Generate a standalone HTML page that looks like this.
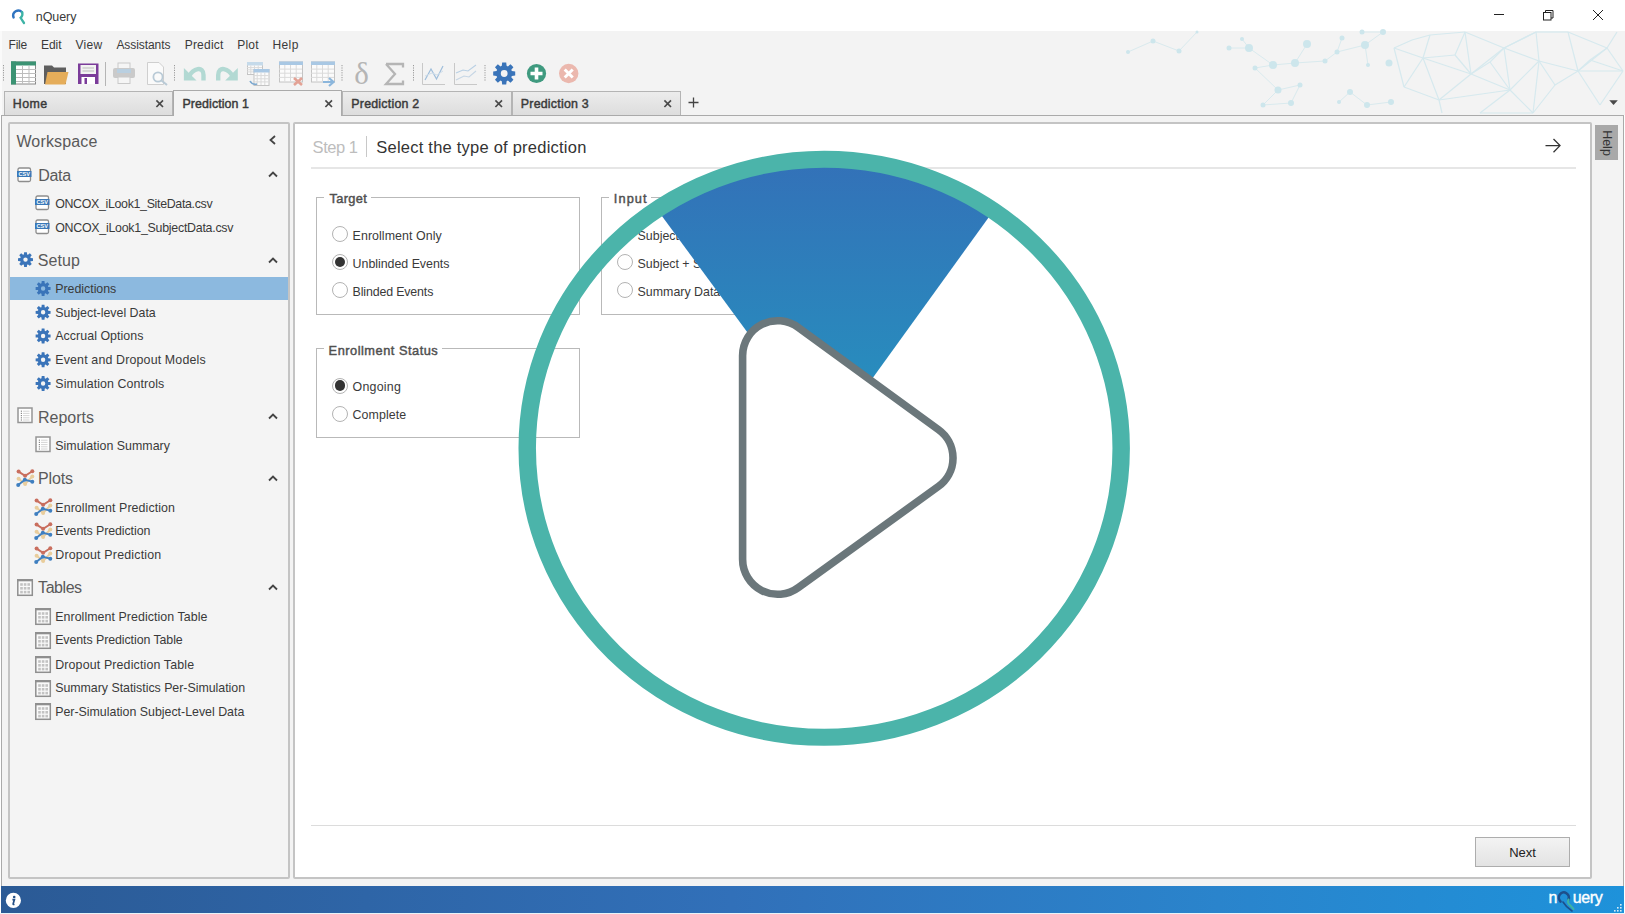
<!DOCTYPE html>
<html><head><meta charset="utf-8">
<style>
*{box-sizing:border-box;margin:0;padding:0}
html,body{width:1625px;height:914px;overflow:hidden;background:#fff;font-family:"Liberation Sans",sans-serif;color:#333}
.abs{position:absolute}
.t{position:absolute;white-space:nowrap}
.menu{position:absolute;top:38px;font-size:12px;color:#3a3a3a;white-space:nowrap}
.tab{position:absolute;top:91px;height:24px;border:1px solid #b4b4b4;border-bottom:none;background:linear-gradient(#ececec,#dddddd)}
.tl{position:absolute;font-size:12px;font-weight:bold;color:#444;white-space:nowrap}
.hdr{position:absolute;left:38px;font-size:16px;color:#5a5a5a;white-space:nowrap}
.item{position:absolute;left:55px;font-size:12.4px;color:#3a3a3a;white-space:nowrap}
.radio{position:absolute;width:16px;height:16px;border:1px solid #b3b3b3;border-radius:50%;background:#fff}
.radio.on::after{content:"";position:absolute;left:1.75px;top:1.75px;width:10.5px;height:10.5px;border-radius:50%;background:#333}
.rl{position:absolute;font-size:12.4px;color:#3a3a3a;white-space:nowrap}
.gl{position:absolute;padding:0 3px;background:#fff;font-size:12.6px;font-weight:bold;color:#555;white-space:nowrap}
svg{position:absolute;overflow:visible}
</style></head>
<body>

<div class="abs" style="left:0;top:0;width:1625px;height:31px;background:#fff"></div>
<div class="abs" style="left:0;top:31px;width:1625px;height:84px;background:#f3f3f3"></div>
<div class="abs" style="left:0;top:31px;width:2px;height:84px;background:#fafafa"></div>
<div class="abs" style="left:1px;top:115px;width:1623px;height:772px;background:#f3f3f3;border:1px solid #aaaaaa;border-bottom:none"></div>
<div class="abs" style="left:8px;top:122px;width:282px;height:757px;background:#f4f4f4;border:2px solid #c4c4c4;border-radius:2px"></div>
<div class="abs" style="left:293px;top:122px;width:1299px;height:757px;background:#fff;border:2px solid #c4c4c4;border-radius:2px"></div>
<div class="abs" style="left:1px;top:886px;width:1623px;height:26.5px;background:linear-gradient(90deg,#2b5a95 0%,#3170b9 45%,#2a84cc 75%,#1e92da 100%)"></div>
<div class="abs" style="left:0;top:912.5px;width:1625px;height:1.5px;background:#e8f4f8"></div>
<svg style="left:0;top:0" width="1625" height="914"><line x1="1128" y1="52" x2="1153" y2="41" stroke="#d9eaee" stroke-width="1"/><line x1="1153" y1="41" x2="1179" y2="51" stroke="#d9eaee" stroke-width="1"/><line x1="1197" y1="32" x2="1179" y2="51" stroke="#d9eaee" stroke-width="1"/><line x1="1229" y1="48" x2="1249" y2="48" stroke="#d9eaee" stroke-width="1"/><line x1="1242" y1="39" x2="1249" y2="48" stroke="#d9eaee" stroke-width="1"/><line x1="1249" y1="48" x2="1273" y2="65" stroke="#d9eaee" stroke-width="1"/><line x1="1273" y1="65" x2="1295" y2="63" stroke="#d9eaee" stroke-width="1"/><line x1="1295" y1="63" x2="1307" y2="44" stroke="#d9eaee" stroke-width="1"/><line x1="1273" y1="65" x2="1255" y2="68" stroke="#d9eaee" stroke-width="1"/><line x1="1255" y1="68" x2="1278" y2="90" stroke="#d9eaee" stroke-width="1"/><line x1="1278" y1="90" x2="1300" y2="85" stroke="#d9eaee" stroke-width="1"/><line x1="1278" y1="90" x2="1263" y2="105" stroke="#d9eaee" stroke-width="1"/><line x1="1263" y1="105" x2="1291" y2="103" stroke="#d9eaee" stroke-width="1"/><line x1="1295" y1="63" x2="1325" y2="61" stroke="#d9eaee" stroke-width="1"/><line x1="1325" y1="61" x2="1337" y2="52" stroke="#d9eaee" stroke-width="1"/><line x1="1337" y1="52" x2="1342" y2="38" stroke="#d9eaee" stroke-width="1"/><line x1="1337" y1="52" x2="1365" y2="45" stroke="#d9eaee" stroke-width="1"/><line x1="1365" y1="45" x2="1368" y2="65" stroke="#d9eaee" stroke-width="1"/><line x1="1350" y1="92" x2="1339" y2="102" stroke="#d9eaee" stroke-width="1"/><line x1="1350" y1="92" x2="1367" y2="105" stroke="#d9eaee" stroke-width="1"/><line x1="1367" y1="105" x2="1391" y2="102" stroke="#d9eaee" stroke-width="1"/><line x1="1365" y1="45" x2="1383" y2="32" stroke="#d9eaee" stroke-width="1"/><line x1="1383" y1="32" x2="1362" y2="32" stroke="#d9eaee" stroke-width="1"/><line x1="1300" y1="85" x2="1291" y2="103" stroke="#d9eaee" stroke-width="1"/><circle cx="1128" cy="52" r="2" fill="#cde6ec"/><circle cx="1153" cy="41" r="2.5" fill="#cde6ec"/><circle cx="1179" cy="51" r="2.5" fill="#cde6ec"/><circle cx="1197" cy="32" r="1.5" fill="#cde6ec"/><circle cx="1229" cy="48" r="2.5" fill="#cde6ec"/><circle cx="1242" cy="39" r="2" fill="#cde6ec"/><circle cx="1249" cy="48" r="4" fill="#cde6ec"/><circle cx="1273" cy="65" r="4" fill="#cde6ec"/><circle cx="1295" cy="63" r="4" fill="#cde6ec"/><circle cx="1307" cy="44" r="4" fill="#cde6ec"/><circle cx="1325" cy="61" r="2.5" fill="#cde6ec"/><circle cx="1337" cy="52" r="2.5" fill="#cde6ec"/><circle cx="1342" cy="38" r="2.5" fill="#cde6ec"/><circle cx="1365" cy="45" r="4" fill="#cde6ec"/><circle cx="1368" cy="65" r="2" fill="#cde6ec"/><circle cx="1255" cy="68" r="2.5" fill="#cde6ec"/><circle cx="1278" cy="90" r="3.5" fill="#cde6ec"/><circle cx="1300" cy="85" r="2.5" fill="#cde6ec"/><circle cx="1263" cy="105" r="2.5" fill="#cde6ec"/><circle cx="1291" cy="103" r="3" fill="#cde6ec"/><circle cx="1350" cy="92" r="3" fill="#cde6ec"/><circle cx="1339" cy="102" r="2" fill="#cde6ec"/><circle cx="1367" cy="105" r="3" fill="#cde6ec"/><circle cx="1391" cy="102" r="3" fill="#cde6ec"/><circle cx="1389" cy="63" r="3.5" fill="#cde6ec"/><circle cx="1383" cy="32" r="3" fill="#cde6ec"/><circle cx="1362" cy="32" r="2.5" fill="#cde6ec"/><line x1="1394" y1="48" x2="1423" y2="58" stroke="#d6e9ee" stroke-width="1.2"/><line x1="1423" y1="58" x2="1430" y2="35" stroke="#d6e9ee" stroke-width="1.2"/><line x1="1394" y1="48" x2="1404" y2="87" stroke="#d6e9ee" stroke-width="1.2"/><line x1="1404" y1="87" x2="1423" y2="58" stroke="#d6e9ee" stroke-width="1.2"/><line x1="1423" y1="58" x2="1439" y2="100" stroke="#d6e9ee" stroke-width="1.2"/><line x1="1404" y1="87" x2="1439" y2="100" stroke="#d6e9ee" stroke-width="1.2"/><line x1="1430" y1="35" x2="1465" y2="32" stroke="#d6e9ee" stroke-width="1.2"/><line x1="1465" y1="32" x2="1471" y2="74" stroke="#d6e9ee" stroke-width="1.2"/><line x1="1423" y1="58" x2="1471" y2="74" stroke="#d6e9ee" stroke-width="1.2"/><line x1="1439" y1="100" x2="1471" y2="74" stroke="#d6e9ee" stroke-width="1.2"/><line x1="1471" y1="74" x2="1504" y2="48" stroke="#d6e9ee" stroke-width="1.2"/><line x1="1465" y1="32" x2="1504" y2="48" stroke="#d6e9ee" stroke-width="1.2"/><line x1="1504" y1="48" x2="1510" y2="90" stroke="#d6e9ee" stroke-width="1.2"/><line x1="1471" y1="74" x2="1510" y2="90" stroke="#d6e9ee" stroke-width="1.2"/><line x1="1510" y1="90" x2="1439" y2="100" stroke="#d6e9ee" stroke-width="1.2"/><line x1="1439" y1="100" x2="1442" y2="113" stroke="#d6e9ee" stroke-width="1.2"/><line x1="1510" y1="90" x2="1480" y2="113" stroke="#d6e9ee" stroke-width="1.2"/><line x1="1504" y1="48" x2="1536" y2="32" stroke="#d6e9ee" stroke-width="1.2"/><line x1="1536" y1="32" x2="1539" y2="61" stroke="#d6e9ee" stroke-width="1.2"/><line x1="1504" y1="48" x2="1539" y2="61" stroke="#d6e9ee" stroke-width="1.2"/><line x1="1539" y1="61" x2="1510" y2="90" stroke="#d6e9ee" stroke-width="1.2"/><line x1="1510" y1="90" x2="1533" y2="113" stroke="#d6e9ee" stroke-width="1.2"/><line x1="1539" y1="61" x2="1578" y2="71" stroke="#d6e9ee" stroke-width="1.2"/><line x1="1536" y1="32" x2="1568" y2="32" stroke="#d6e9ee" stroke-width="1.2"/><line x1="1568" y1="32" x2="1578" y2="71" stroke="#d6e9ee" stroke-width="1.2"/><line x1="1578" y1="71" x2="1607" y2="48" stroke="#d6e9ee" stroke-width="1.2"/><line x1="1568" y1="32" x2="1607" y2="48" stroke="#d6e9ee" stroke-width="1.2"/><line x1="1607" y1="48" x2="1617" y2="32" stroke="#d6e9ee" stroke-width="1.2"/><line x1="1607" y1="48" x2="1623" y2="71" stroke="#d6e9ee" stroke-width="1.2"/><line x1="1578" y1="71" x2="1623" y2="71" stroke="#d6e9ee" stroke-width="1.2"/><line x1="1623" y1="71" x2="1600" y2="105" stroke="#d6e9ee" stroke-width="1.2"/><line x1="1578" y1="71" x2="1600" y2="105" stroke="#d6e9ee" stroke-width="1.2"/><line x1="1533" y1="113" x2="1480" y2="113" stroke="#d6e9ee" stroke-width="1.2"/><line x1="1539" y1="61" x2="1533" y2="113" stroke="#d6e9ee" stroke-width="1.2"/><line x1="1455" y1="55" x2="1465" y2="32" stroke="#d6e9ee" stroke-width="1.2"/><line x1="1455" y1="55" x2="1471" y2="74" stroke="#d6e9ee" stroke-width="1.2"/><line x1="1455" y1="55" x2="1423" y2="58" stroke="#d6e9ee" stroke-width="1.2"/><line x1="1490" y1="62" x2="1504" y2="48" stroke="#d6e9ee" stroke-width="1.2"/><line x1="1490" y1="62" x2="1471" y2="74" stroke="#d6e9ee" stroke-width="1.2"/><line x1="1490" y1="62" x2="1510" y2="90" stroke="#d6e9ee" stroke-width="1.2"/><line x1="1520" y1="40" x2="1536" y2="32" stroke="#d6e9ee" stroke-width="1.2"/><line x1="1520" y1="40" x2="1504" y2="48" stroke="#d6e9ee" stroke-width="1.2"/><line x1="1555" y1="85" x2="1539" y2="61" stroke="#d6e9ee" stroke-width="1.2"/><line x1="1555" y1="85" x2="1578" y2="71" stroke="#d6e9ee" stroke-width="1.2"/><line x1="1555" y1="85" x2="1533" y2="113" stroke="#d6e9ee" stroke-width="1.2"/><line x1="1590" y1="60" x2="1578" y2="71" stroke="#d6e9ee" stroke-width="1.2"/><line x1="1590" y1="60" x2="1607" y2="48" stroke="#d6e9ee" stroke-width="1.2"/><line x1="1590" y1="60" x2="1623" y2="71" stroke="#d6e9ee" stroke-width="1.2"/><line x1="1412" y1="40" x2="1394" y2="48" stroke="#d6e9ee" stroke-width="1.2"/><line x1="1412" y1="40" x2="1430" y2="35" stroke="#d6e9ee" stroke-width="1.2"/></svg>
<svg style="left:0;top:0" width="40" height="31">
<path d="M13.6 17.5 A5.1 5.1 0 0 1 22.1 12.2" fill="none" stroke="#2f74c0" stroke-width="2.4" stroke-linecap="round"/>
<path d="M22.1 12.2 A5.1 5.1 0 0 1 20.6 17.8 L24 23" fill="none" stroke="#3db3a6" stroke-width="2.3" stroke-linecap="round"/>
</svg>
<div class="t" style="left:35.8px;top:9.69px;font-size:12.5px;letter-spacing:-0.080px;color:#3a3a3a;line-height:normal;">nQuery</div>
<svg style="left:1480px;top:0" width="145" height="31">
<line x1="14" y1="14.5" x2="24" y2="14.5" stroke="#222" stroke-width="1"/>
<rect x="63.5" y="12.5" width="7.5" height="7.5" fill="none" stroke="#222" stroke-width="1"/>
<path d="M65.5 12.5 V10.5 H73 V18 H71" fill="none" stroke="#222" stroke-width="1"/>
<line x1="113" y1="10" x2="123" y2="20" stroke="#222" stroke-width="1"/>
<line x1="123" y1="10" x2="113" y2="20" stroke="#222" stroke-width="1"/>
</svg>
<div class="t" style="left:8.6px;top:37.94px;font-size:12px;letter-spacing:-0.273px;color:#3a3a3a;line-height:normal;">File</div>
<div class="t" style="left:41.0px;top:37.94px;font-size:12px;letter-spacing:-0.067px;color:#3a3a3a;line-height:normal;">Edit</div>
<div class="t" style="left:75.4px;top:37.94px;font-size:12px;letter-spacing:0.300px;color:#3a3a3a;line-height:normal;">View</div>
<div class="t" style="left:116.4px;top:37.94px;font-size:12px;letter-spacing:-0.073px;color:#3a3a3a;line-height:normal;">Assistants</div>
<div class="t" style="left:184.7px;top:37.94px;font-size:12px;letter-spacing:0.213px;color:#3a3a3a;line-height:normal;">Predict</div>
<div class="t" style="left:237.2px;top:37.94px;font-size:12px;letter-spacing:0.233px;color:#3a3a3a;line-height:normal;">Plot</div>
<div class="t" style="left:272.5px;top:37.94px;font-size:12px;letter-spacing:0.380px;color:#3a3a3a;line-height:normal;">Help</div>
<svg style="left:0;top:56px" width="600" height="34"><rect x="3" y="9.0" width="1" height="1.2" fill="#9a9a9a"/><rect x="3" y="11.4" width="1" height="1.2" fill="#9a9a9a"/><rect x="3" y="13.8" width="1" height="1.2" fill="#9a9a9a"/><rect x="3" y="16.2" width="1" height="1.2" fill="#9a9a9a"/><rect x="3" y="18.6" width="1" height="1.2" fill="#9a9a9a"/><rect x="3" y="21.0" width="1" height="1.2" fill="#9a9a9a"/><rect x="3" y="23.4" width="1" height="1.2" fill="#9a9a9a"/><rect x="174" y="9.0" width="1" height="1.2" fill="#9a9a9a"/><rect x="174" y="11.4" width="1" height="1.2" fill="#9a9a9a"/><rect x="174" y="13.8" width="1" height="1.2" fill="#9a9a9a"/><rect x="174" y="16.2" width="1" height="1.2" fill="#9a9a9a"/><rect x="174" y="18.6" width="1" height="1.2" fill="#9a9a9a"/><rect x="174" y="21.0" width="1" height="1.2" fill="#9a9a9a"/><rect x="174" y="23.4" width="1" height="1.2" fill="#9a9a9a"/><rect x="341.5" y="9.0" width="1" height="1.2" fill="#9a9a9a"/><rect x="341.5" y="11.4" width="1" height="1.2" fill="#9a9a9a"/><rect x="341.5" y="13.8" width="1" height="1.2" fill="#9a9a9a"/><rect x="341.5" y="16.2" width="1" height="1.2" fill="#9a9a9a"/><rect x="341.5" y="18.6" width="1" height="1.2" fill="#9a9a9a"/><rect x="341.5" y="21.0" width="1" height="1.2" fill="#9a9a9a"/><rect x="341.5" y="23.4" width="1" height="1.2" fill="#9a9a9a"/><rect x="413" y="9.0" width="1" height="1.2" fill="#9a9a9a"/><rect x="413" y="11.4" width="1" height="1.2" fill="#9a9a9a"/><rect x="413" y="13.8" width="1" height="1.2" fill="#9a9a9a"/><rect x="413" y="16.2" width="1" height="1.2" fill="#9a9a9a"/><rect x="413" y="18.6" width="1" height="1.2" fill="#9a9a9a"/><rect x="413" y="21.0" width="1" height="1.2" fill="#9a9a9a"/><rect x="413" y="23.4" width="1" height="1.2" fill="#9a9a9a"/><rect x="484.5" y="9.0" width="1" height="1.2" fill="#9a9a9a"/><rect x="484.5" y="11.4" width="1" height="1.2" fill="#9a9a9a"/><rect x="484.5" y="13.8" width="1" height="1.2" fill="#9a9a9a"/><rect x="484.5" y="16.2" width="1" height="1.2" fill="#9a9a9a"/><rect x="484.5" y="18.6" width="1" height="1.2" fill="#9a9a9a"/><rect x="484.5" y="21.0" width="1" height="1.2" fill="#9a9a9a"/><rect x="484.5" y="23.4" width="1" height="1.2" fill="#9a9a9a"/><rect x="11.5" y="6" width="24" height="22" fill="#fff" stroke="#8a8a8a" stroke-width="1"/><rect x="11" y="5.5" width="25" height="4" fill="#3b9373"/><rect x="11" y="5.5" width="5" height="23" fill="#3b9373"/><line x1="16" y1="13.5" x2="36" y2="13.5" stroke="#bdbdbd" stroke-width="1"/><line x1="16" y1="17.5" x2="36" y2="17.5" stroke="#bdbdbd" stroke-width="1"/><line x1="16" y1="21.5" x2="36" y2="21.5" stroke="#bdbdbd" stroke-width="1"/><line x1="16" y1="25.5" x2="36" y2="25.5" stroke="#bdbdbd" stroke-width="1"/><line x1="22.5" y1="9.5" x2="22.5" y2="28" stroke="#bdbdbd" stroke-width="1"/><line x1="29" y1="9.5" x2="29" y2="28" stroke="#bdbdbd" stroke-width="1"/><path d="M44 9.5 H52 L54 11.5 H66 V28 H44 Z" fill="#5e5e5e"/><path d="M47.5 16 H68.5 L65.5 28.5 H45 Z" fill="#e5ad5a"/><rect x="78" y="7.5" width="20.5" height="20.5" fill="#7b3c9a"/><rect x="80.5" y="9" width="15.5" height="9" fill="#f2f2f2"/><line x1="82.5" y1="12" x2="94" y2="12" stroke="#bbb" stroke-width="1"/><line x1="82.5" y1="15" x2="94" y2="15" stroke="#bbb" stroke-width="1"/><rect x="81.5" y="21" width="13.5" height="7" fill="#fff"/><rect x="84.5" y="22" width="2.5" height="6" fill="#7b3c9a"/><line x1="105.5" y1="6" x2="105.5" y2="30" stroke="#b5b5b5" stroke-width="1"/><rect x="118" y="7" width="12" height="6" fill="#f5f5f5" stroke="#c9c9c9"/><rect x="113" y="12" width="22" height="10" rx="2" fill="#cacaca"/><rect x="117" y="13" width="14" height="4" fill="#b9cfe0"/><rect x="118" y="21" width="12" height="6.5" fill="#f5f5f5" stroke="#c9c9c9"/><path d="M147.5 6.5 H159 L163.5 11 V28.5 H147.5 Z" fill="#fafafa" stroke="#cfcfcf" stroke-width="1"/><circle cx="158" cy="21" r="4.6" fill="none" stroke="#b9cad6" stroke-width="1.8"/><line x1="161.5" y1="24.5" x2="167" y2="29" stroke="#b9cad6" stroke-width="2"/><g transform="translate(0 -56)"><path d="M183.9 68 L183.9 80.6 L196.5 80.6 Z" fill="#b2d9d3"/><path d="M189 76.5 C193 68.5 203.5 65.5 203.5 75 L203.5 80.6" fill="none" stroke="#b2d9d3" stroke-width="4.4"/><path d="M237.79999999999998 68 L237.79999999999998 80.6 L225.2 80.6 Z" fill="#b2d9d3"/><path d="M232.7 76.5 C228.7 68.5 218.2 65.5 218.2 75 L218.2 80.6" fill="none" stroke="#b2d9d3" stroke-width="4.4"/></g><rect x="247.5" y="6.5" width="15" height="12" fill="#fbfbfb" stroke="#c4c4c4"/><rect x="247" y="6" width="16" height="3.5" fill="#c5daea"/><line x1="247" y1="11.6" x2="262" y2="11.6" stroke="#dadada"/><line x1="247" y1="13.8" x2="262" y2="13.8" stroke="#dadada"/><line x1="247" y1="15.9" x2="262" y2="15.9" stroke="#dadada"/><line x1="250.8" y1="9.5" x2="250.8" y2="18" stroke="#dadada"/><line x1="254.5" y1="9.5" x2="254.5" y2="18" stroke="#dadada"/><line x1="258.2" y1="9.5" x2="258.2" y2="18" stroke="#dadada"/><rect x="254.0" y="13.5" width="15" height="16" fill="#fbfbfb" stroke="#c4c4c4"/><rect x="253.5" y="13" width="16" height="3.5" fill="#a9c8e4"/><line x1="253.5" y1="19.6" x2="268.5" y2="19.6" stroke="#dadada"/><line x1="253.5" y1="22.8" x2="268.5" y2="22.8" stroke="#dadada"/><line x1="253.5" y1="25.9" x2="268.5" y2="25.9" stroke="#dadada"/><line x1="257.2" y1="16.5" x2="257.2" y2="29" stroke="#dadada"/><line x1="261.0" y1="16.5" x2="261.0" y2="29" stroke="#dadada"/><line x1="264.8" y1="16.5" x2="264.8" y2="29" stroke="#dadada"/><path d="M250 25 Q252 29 257 28" fill="none" stroke="#7aa7cf" stroke-width="1.6"/><rect x="279.5" y="6.0" width="23" height="20" fill="#fbfbfb" stroke="#c4c4c4"/><rect x="279" y="5.5" width="24" height="3.5" fill="#a9c8e4"/><line x1="279" y1="13.1" x2="302" y2="13.1" stroke="#dadada"/><line x1="279" y1="17.2" x2="302" y2="17.2" stroke="#dadada"/><line x1="279" y1="21.4" x2="302" y2="21.4" stroke="#dadada"/><line x1="284.8" y1="9.0" x2="284.8" y2="25.5" stroke="#dadada"/><line x1="290.5" y1="9.0" x2="290.5" y2="25.5" stroke="#dadada"/><line x1="296.2" y1="9.0" x2="296.2" y2="25.5" stroke="#dadada"/><path d="M294 22 L302 29 M302 22 L294 29" stroke="#e3a295" stroke-width="2.6"/><rect x="311.5" y="6.0" width="23" height="20" fill="#fbfbfb" stroke="#c4c4c4"/><rect x="311" y="5.5" width="24" height="3.5" fill="#a9c8e4"/><line x1="311" y1="13.1" x2="334" y2="13.1" stroke="#dadada"/><line x1="311" y1="17.2" x2="334" y2="17.2" stroke="#dadada"/><line x1="311" y1="21.4" x2="334" y2="21.4" stroke="#dadada"/><line x1="316.8" y1="9.0" x2="316.8" y2="25.5" stroke="#dadada"/><line x1="322.5" y1="9.0" x2="322.5" y2="25.5" stroke="#dadada"/><line x1="328.2" y1="9.0" x2="328.2" y2="25.5" stroke="#dadada"/><path d="M323 26 H333 M329 22 L333.5 26 L329 30" fill="none" stroke="#8bb6dc" stroke-width="2.2"/><text x="354.2" y="28" font-family="Liberation Serif" font-size="31" fill="#b5b5b5">δ</text><path d="M386 8 H403 V11.5 M403 8 M386 8 L395 18 L386 28 H403 V24.5" fill="none" stroke="#b5b5b5" stroke-width="2.3"/><path d="M422.5 7 V28.5 H445" fill="none" stroke="#c8c8c8" stroke-width="1"/><path d="M425 24 L431 13 L436.5 23 L443 10" fill="none" stroke="#9fbedb" stroke-width="1.2"/><path d="M425 20 L432 17 L437 19 L443 15" fill="none" stroke="#cfdde9" stroke-width="1"/><path d="M454.5 7 V28.5 H477" fill="none" stroke="#c8c8c8" stroke-width="1"/><path d="M456 17 L463 14 L468 15 L476 9" fill="none" stroke="#b9d0e4" stroke-width="1.1"/><path d="M456 24 L464 20 L469 21 L476 15" fill="none" stroke="#c6d6e5" stroke-width="1.1"/><path d="M511.83 15.10 L515.21 15.47 L515.21 19.53 L511.83 19.90 L511.29 21.20 L513.43 23.85 L510.55 26.73 L507.90 24.59 L506.60 25.13 L506.23 28.51 L502.17 28.51 L501.80 25.13 L500.50 24.59 L497.85 26.73 L494.97 23.85 L497.11 21.20 L496.57 19.90 L493.19 19.53 L493.19 15.47 L496.57 15.10 L497.11 13.80 L494.97 11.15 L497.85 8.27 L500.50 10.41 L501.80 9.87 L502.17 6.49 L506.23 6.49 L506.60 9.87 L507.90 10.41 L510.55 8.27 L513.43 11.15 L511.29 13.80Z M507.59999999999997 17.5 A3.4 3.4 0 1 0 500.8 17.5 A3.4 3.4 0 1 0 507.59999999999997 17.5Z" fill="#3a74b9" fill-rule="evenodd"/><circle cx="536.5" cy="17.5" r="9.6" fill="#3f9a7f"/><path d="M536.5 11.5 V23.5 M530.5 17.5 H542.5" stroke="#fff" stroke-width="3.6"/><circle cx="568.7" cy="17.5" r="9.7" fill="#ebb8ae"/><path d="M564.7 13.5 L572.7 21.5 M572.7 13.5 L564.7 21.5" stroke="#fff" stroke-width="3"/></svg>
<div class="tab" style="left:4px;width:169px"></div>
<div class="t" style="left:12.8px;top:96.98px;font-size:12.4px;letter-spacing:0.464px;color:#3a3a3a;line-height:normal;-webkit-text-stroke:0.45px #3a3a3a">Home</div>
<svg style="left:155.6px;top:100px" width="8" height="8"><path d="M0.4 0.4 L7 7 M7 0.4 L0.4 7" stroke="#4a4a4a" stroke-width="1.7"/></svg>
<div class="tab" style="left:342px;width:170px"></div>
<div class="t" style="left:351.3px;top:96.98px;font-size:12.4px;letter-spacing:0.221px;color:#3a3a3a;line-height:normal;-webkit-text-stroke:0.45px #3a3a3a">Prediction 2</div>
<svg style="left:494.6px;top:100px" width="8" height="8"><path d="M0.4 0.4 L7 7 M7 0.4 L0.4 7" stroke="#4a4a4a" stroke-width="1.7"/></svg>
<div class="tab" style="left:512px;width:169px"></div>
<div class="t" style="left:520.8px;top:96.98px;font-size:12.4px;letter-spacing:0.221px;color:#3a3a3a;line-height:normal;-webkit-text-stroke:0.45px #3a3a3a">Prediction 3</div>
<svg style="left:663.6px;top:100px" width="8" height="8"><path d="M0.4 0.4 L7 7 M7 0.4 L0.4 7" stroke="#4a4a4a" stroke-width="1.7"/></svg>
<div class="tab" style="left:173px;width:169px;top:90px;height:26px;background:#f3f3f3;border-color:#aaaaaa"></div>
<div class="t" style="left:182.5px;top:96.98px;font-size:12.4px;letter-spacing:0.093px;color:#3a3a3a;line-height:normal;-webkit-text-stroke:0.45px #3a3a3a">Prediction 1</div>
<svg style="left:324.6px;top:100px" width="8" height="8"><path d="M0.4 0.4 L7 7 M7 0.4 L0.4 7" stroke="#4a4a4a" stroke-width="1.7"/></svg>
<svg style="left:688px;top:97px" width="12" height="12"><path d="M5.5 0.5 V10.5 M0.5 5.5 H10.5" stroke="#444" stroke-width="1.3"/></svg>
<svg style="left:1609px;top:100px" width="10" height="7"><path d="M0.3 0.2 H8.8 L4.55 5 Z" fill="#4a4a4a"/></svg>
<div class="t" style="left:16.4px;top:132.92px;font-size:16px;letter-spacing:0.155px;color:#5a5a5a;line-height:normal;">Workspace</div>
<svg style="left:268px;top:135px" width="10" height="10"><path d="M7 1 L2.5 5 L7 9" fill="none" stroke="#444" stroke-width="1.8"/></svg>
<svg style="left:17px;top:167px" width="15" height="16"><rect x="1" y="1" width="12.5" height="13.5" rx="1.5" fill="#fff" stroke="#8d8d8d" stroke-width="1.3"/><rect x="0" y="4" width="14.5" height="6" fill="#3a78b8"/><text x="7.2" y="9.2" font-size="5.6" font-weight="bold" fill="#fff" text-anchor="middle" font-family="Liberation Sans">CSV</text></svg>
<div class="t" style="left:38.3px;top:166.82px;font-size:16px;letter-spacing:-0.347px;color:#5a5a5a;line-height:normal;">Data</div>
<svg style="left:268px;top:170px" width="10" height="8"><path d="M1 6.5 L5 2.5 L9 6.5" fill="none" stroke="#444" stroke-width="1.8"/></svg>
<svg style="left:35px;top:195px" width="15" height="16"><rect x="1" y="1" width="12.5" height="13.5" rx="1.5" fill="#fff" stroke="#8d8d8d" stroke-width="1.3"/><rect x="0" y="4" width="14.5" height="6" fill="#3a78b8"/><text x="7.2" y="9.2" font-size="5.6" font-weight="bold" fill="#fff" text-anchor="middle" font-family="Liberation Sans">CSV</text></svg>
<div class="t" style="left:55.2px;top:197.08px;font-size:12.4px;letter-spacing:-0.326px;color:#3a3a3a;line-height:normal;">ONCOX_iLook1_SiteData.csv</div>
<svg style="left:35px;top:219px" width="15" height="16"><rect x="1" y="1" width="12.5" height="13.5" rx="1.5" fill="#fff" stroke="#8d8d8d" stroke-width="1.3"/><rect x="0" y="4" width="14.5" height="6" fill="#3a78b8"/><text x="7.2" y="9.2" font-size="5.6" font-weight="bold" fill="#fff" text-anchor="middle" font-family="Liberation Sans">CSV</text></svg>
<div class="t" style="left:55.2px;top:220.78px;font-size:12.4px;letter-spacing:-0.259px;color:#3a3a3a;line-height:normal;">ONCOX_iLook1_SubjectData.csv</div>
<svg style="left:0;top:0" width="1" height="1"><path d="M30.65 257.98 L32.97 258.22 L32.97 260.98 L30.65 261.22 L30.29 262.10 L31.76 263.91 L29.81 265.86 L28.00 264.39 L27.12 264.75 L26.88 267.07 L24.12 267.07 L23.88 264.75 L23.00 264.39 L21.19 265.86 L19.24 263.91 L20.71 262.10 L20.35 261.22 L18.03 260.98 L18.03 258.22 L20.35 257.98 L20.71 257.10 L19.24 255.29 L21.19 253.34 L23.00 254.81 L23.88 254.45 L24.12 252.13 L26.88 252.13 L27.12 254.45 L28.00 254.81 L29.81 253.34 L31.76 255.29 L30.29 257.10Z M27.7 259.6 A2.2 2.2 0 1 0 23.3 259.6 A2.2 2.2 0 1 0 27.7 259.6Z" fill="#3a74b9" fill-rule="evenodd"/></svg>
<div class="t" style="left:37.8px;top:251.72px;font-size:16px;letter-spacing:0.090px;color:#5a5a5a;line-height:normal;">Setup</div>
<svg style="left:268px;top:256px" width="10" height="8"><path d="M1 6.5 L5 2.5 L9 6.5" fill="none" stroke="#444" stroke-width="1.8"/></svg>
<div class="abs" style="left:10px;top:277px;width:278px;height:23px;background:#8cb9df"></div>
<svg style="left:0;top:0" width="1" height="1"><path d="M48.25 286.88 L50.57 287.12 L50.57 289.88 L48.25 290.12 L47.89 291.00 L49.36 292.81 L47.41 294.76 L45.60 293.29 L44.72 293.65 L44.48 295.97 L41.72 295.97 L41.48 293.65 L40.60 293.29 L38.79 294.76 L36.84 292.81 L38.31 291.00 L37.95 290.12 L35.63 289.88 L35.63 287.12 L37.95 286.88 L38.31 286.00 L36.84 284.19 L38.79 282.24 L40.60 283.71 L41.48 283.35 L41.72 281.03 L44.48 281.03 L44.72 283.35 L45.60 283.71 L47.41 282.24 L49.36 284.19 L47.89 286.00Z M45.300000000000004 288.5 A2.2 2.2 0 1 0 40.9 288.5 A2.2 2.2 0 1 0 45.300000000000004 288.5Z" fill="#3a74b9" fill-rule="evenodd"/></svg>
<div class="t" style="left:55.3px;top:281.98px;font-size:12.4px;letter-spacing:-0.032px;color:#3a3a3a;line-height:normal;">Predictions</div>
<svg style="left:0;top:0" width="1" height="1"><path d="M48.25 310.68 L50.57 310.92 L50.57 313.68 L48.25 313.92 L47.89 314.80 L49.36 316.61 L47.41 318.56 L45.60 317.09 L44.72 317.45 L44.48 319.77 L41.72 319.77 L41.48 317.45 L40.60 317.09 L38.79 318.56 L36.84 316.61 L38.31 314.80 L37.95 313.92 L35.63 313.68 L35.63 310.92 L37.95 310.68 L38.31 309.80 L36.84 307.99 L38.79 306.04 L40.60 307.51 L41.48 307.15 L41.72 304.83 L44.48 304.83 L44.72 307.15 L45.60 307.51 L47.41 306.04 L49.36 307.99 L47.89 309.80Z M45.300000000000004 312.3 A2.2 2.2 0 1 0 40.9 312.3 A2.2 2.2 0 1 0 45.300000000000004 312.3Z" fill="#3a74b9" fill-rule="evenodd"/></svg>
<div class="t" style="left:55.3px;top:305.68px;font-size:12.4px;letter-spacing:-0.005px;color:#3a3a3a;line-height:normal;">Subject-level Data</div>
<svg style="left:0;top:0" width="1" height="1"><path d="M48.25 334.38 L50.57 334.62 L50.57 337.38 L48.25 337.62 L47.89 338.50 L49.36 340.31 L47.41 342.26 L45.60 340.79 L44.72 341.15 L44.48 343.47 L41.72 343.47 L41.48 341.15 L40.60 340.79 L38.79 342.26 L36.84 340.31 L38.31 338.50 L37.95 337.62 L35.63 337.38 L35.63 334.62 L37.95 334.38 L38.31 333.50 L36.84 331.69 L38.79 329.74 L40.60 331.21 L41.48 330.85 L41.72 328.53 L44.48 328.53 L44.72 330.85 L45.60 331.21 L47.41 329.74 L49.36 331.69 L47.89 333.50Z M45.300000000000004 336 A2.2 2.2 0 1 0 40.9 336 A2.2 2.2 0 1 0 45.300000000000004 336Z" fill="#3a74b9" fill-rule="evenodd"/></svg>
<div class="t" style="left:55.3px;top:329.48px;font-size:12.4px;letter-spacing:0.047px;color:#3a3a3a;line-height:normal;">Accrual Options</div>
<svg style="left:0;top:0" width="1" height="1"><path d="M48.25 358.18 L50.57 358.42 L50.57 361.18 L48.25 361.42 L47.89 362.30 L49.36 364.11 L47.41 366.06 L45.60 364.59 L44.72 364.95 L44.48 367.27 L41.72 367.27 L41.48 364.95 L40.60 364.59 L38.79 366.06 L36.84 364.11 L38.31 362.30 L37.95 361.42 L35.63 361.18 L35.63 358.42 L37.95 358.18 L38.31 357.30 L36.84 355.49 L38.79 353.54 L40.60 355.01 L41.48 354.65 L41.72 352.33 L44.48 352.33 L44.72 354.65 L45.60 355.01 L47.41 353.54 L49.36 355.49 L47.89 357.30Z M45.300000000000004 359.8 A2.2 2.2 0 1 0 40.9 359.8 A2.2 2.2 0 1 0 45.300000000000004 359.8Z" fill="#3a74b9" fill-rule="evenodd"/></svg>
<div class="t" style="left:55.3px;top:353.08px;font-size:12.4px;letter-spacing:0.156px;color:#3a3a3a;line-height:normal;">Event and Dropout Models</div>
<svg style="left:0;top:0" width="1" height="1"><path d="M48.25 381.88 L50.57 382.12 L50.57 384.88 L48.25 385.12 L47.89 386.00 L49.36 387.81 L47.41 389.76 L45.60 388.29 L44.72 388.65 L44.48 390.97 L41.72 390.97 L41.48 388.65 L40.60 388.29 L38.79 389.76 L36.84 387.81 L38.31 386.00 L37.95 385.12 L35.63 384.88 L35.63 382.12 L37.95 381.88 L38.31 381.00 L36.84 379.19 L38.79 377.24 L40.60 378.71 L41.48 378.35 L41.72 376.03 L44.48 376.03 L44.72 378.35 L45.60 378.71 L47.41 377.24 L49.36 379.19 L47.89 381.00Z M45.300000000000004 383.5 A2.2 2.2 0 1 0 40.9 383.5 A2.2 2.2 0 1 0 45.300000000000004 383.5Z" fill="#3a74b9" fill-rule="evenodd"/></svg>
<div class="t" style="left:55.3px;top:376.88px;font-size:12.4px;letter-spacing:0.088px;color:#3a3a3a;line-height:normal;">Simulation Controls</div>
<svg style="left:17px;top:407px" width="16" height="16"><rect x="1" y="1" width="14" height="14.5" fill="#fff" stroke="#959595" stroke-width="1.5"/><line x1="6" y1="4.2" x2="12.5" y2="4.2" stroke="#c9c9c9" stroke-width="0.8"/><rect x="3.8" y="3.6" width="1.2" height="1.2" fill="#8a8a8a"/><line x1="6" y1="6.4" x2="12.5" y2="6.4" stroke="#c9c9c9" stroke-width="0.8"/><rect x="3.8" y="5.8" width="1.2" height="1.2" fill="#8a8a8a"/><line x1="6" y1="8.6" x2="12.5" y2="8.6" stroke="#c9c9c9" stroke-width="0.8"/><rect x="3.8" y="8.0" width="1.2" height="1.2" fill="#8a8a8a"/><line x1="6" y1="10.8" x2="12.5" y2="10.8" stroke="#c9c9c9" stroke-width="0.8"/><rect x="3.8" y="10.2" width="1.2" height="1.2" fill="#8a8a8a"/><line x1="6" y1="13.0" x2="12.5" y2="13.0" stroke="#c9c9c9" stroke-width="0.8"/><rect x="3.8" y="12.4" width="1.2" height="1.2" fill="#8a8a8a"/></svg>
<div class="t" style="left:38.1px;top:408.52px;font-size:16px;letter-spacing:-0.033px;color:#5a5a5a;line-height:normal;">Reports</div>
<svg style="left:268px;top:412px" width="10" height="8"><path d="M1 6.5 L5 2.5 L9 6.5" fill="none" stroke="#444" stroke-width="1.8"/></svg>
<svg style="left:35px;top:436px" width="16" height="16"><rect x="1" y="1" width="14" height="14.5" fill="#fff" stroke="#959595" stroke-width="1.5"/><line x1="6" y1="4.2" x2="12.5" y2="4.2" stroke="#c9c9c9" stroke-width="0.8"/><rect x="3.8" y="3.6" width="1.2" height="1.2" fill="#8a8a8a"/><line x1="6" y1="6.4" x2="12.5" y2="6.4" stroke="#c9c9c9" stroke-width="0.8"/><rect x="3.8" y="5.8" width="1.2" height="1.2" fill="#8a8a8a"/><line x1="6" y1="8.6" x2="12.5" y2="8.6" stroke="#c9c9c9" stroke-width="0.8"/><rect x="3.8" y="8.0" width="1.2" height="1.2" fill="#8a8a8a"/><line x1="6" y1="10.8" x2="12.5" y2="10.8" stroke="#c9c9c9" stroke-width="0.8"/><rect x="3.8" y="10.2" width="1.2" height="1.2" fill="#8a8a8a"/><line x1="6" y1="13.0" x2="12.5" y2="13.0" stroke="#c9c9c9" stroke-width="0.8"/><rect x="3.8" y="12.4" width="1.2" height="1.2" fill="#8a8a8a"/></svg>
<div class="t" style="left:55.3px;top:439.08px;font-size:12.4px;letter-spacing:0.018px;color:#3a3a3a;line-height:normal;">Simulation Summary</div>
<svg style="left:16px;top:469px" width="19" height="19"><path d="M2.6 9.8 L9.1 15 L16.3 7.5" fill="none" stroke="#e9cd9c" stroke-width="1.9"/><circle cx="2.6" cy="9.8" r="2.0" fill="#e9cd9c"/><circle cx="9.1" cy="15" r="2.0" fill="#e9cd9c"/><circle cx="16.3" cy="7.5" r="2.0" fill="#e9cd9c"/><path d="M2.6 2.6 L9.1 6.8 L16.3 2.2" fill="none" stroke="#c96e5e" stroke-width="1.9"/><circle cx="2.6" cy="2.6" r="2.0" fill="#c96e5e"/><circle cx="9.1" cy="6.8" r="2.0" fill="#c96e5e"/><circle cx="16.3" cy="2.2" r="2.0" fill="#c96e5e"/><path d="M2.2 16 L8.8 10.8 L16.3 12.7" fill="none" stroke="#3f7fc0" stroke-width="1.9"/><circle cx="2.2" cy="16" r="2.0" fill="#3f7fc0"/><circle cx="8.8" cy="10.8" r="2.0" fill="#3f7fc0"/><circle cx="16.3" cy="12.7" r="2.0" fill="#3f7fc0"/></svg>
<div class="t" style="left:38.1px;top:469.72px;font-size:16px;letter-spacing:-0.150px;color:#5a5a5a;line-height:normal;">Plots</div>
<svg style="left:268px;top:474px" width="10" height="8"><path d="M1 6.5 L5 2.5 L9 6.5" fill="none" stroke="#444" stroke-width="1.8"/></svg>
<svg style="left:34px;top:498px" width="19" height="19"><path d="M2.6 9.8 L9.1 15 L16.3 7.5" fill="none" stroke="#e9cd9c" stroke-width="1.9"/><circle cx="2.6" cy="9.8" r="2.0" fill="#e9cd9c"/><circle cx="9.1" cy="15" r="2.0" fill="#e9cd9c"/><circle cx="16.3" cy="7.5" r="2.0" fill="#e9cd9c"/><path d="M2.6 2.6 L9.1 6.8 L16.3 2.2" fill="none" stroke="#c96e5e" stroke-width="1.9"/><circle cx="2.6" cy="2.6" r="2.0" fill="#c96e5e"/><circle cx="9.1" cy="6.8" r="2.0" fill="#c96e5e"/><circle cx="16.3" cy="2.2" r="2.0" fill="#c96e5e"/><path d="M2.2 16 L8.8 10.8 L16.3 12.7" fill="none" stroke="#3f7fc0" stroke-width="1.9"/><circle cx="2.2" cy="16" r="2.0" fill="#3f7fc0"/><circle cx="8.8" cy="10.8" r="2.0" fill="#3f7fc0"/><circle cx="16.3" cy="12.7" r="2.0" fill="#3f7fc0"/></svg>
<div class="t" style="left:55.3px;top:500.78px;font-size:12.4px;letter-spacing:0.097px;color:#3a3a3a;line-height:normal;">Enrollment Prediction</div>
<svg style="left:34px;top:522px" width="19" height="19"><path d="M2.6 9.8 L9.1 15 L16.3 7.5" fill="none" stroke="#e9cd9c" stroke-width="1.9"/><circle cx="2.6" cy="9.8" r="2.0" fill="#e9cd9c"/><circle cx="9.1" cy="15" r="2.0" fill="#e9cd9c"/><circle cx="16.3" cy="7.5" r="2.0" fill="#e9cd9c"/><path d="M2.6 2.6 L9.1 6.8 L16.3 2.2" fill="none" stroke="#c96e5e" stroke-width="1.9"/><circle cx="2.6" cy="2.6" r="2.0" fill="#c96e5e"/><circle cx="9.1" cy="6.8" r="2.0" fill="#c96e5e"/><circle cx="16.3" cy="2.2" r="2.0" fill="#c96e5e"/><path d="M2.2 16 L8.8 10.8 L16.3 12.7" fill="none" stroke="#3f7fc0" stroke-width="1.9"/><circle cx="2.2" cy="16" r="2.0" fill="#3f7fc0"/><circle cx="8.8" cy="10.8" r="2.0" fill="#3f7fc0"/><circle cx="16.3" cy="12.7" r="2.0" fill="#3f7fc0"/></svg>
<div class="t" style="left:55.3px;top:524.48px;font-size:12.4px;letter-spacing:-0.086px;color:#3a3a3a;line-height:normal;">Events Prediction</div>
<svg style="left:34px;top:546px" width="19" height="19"><path d="M2.6 9.8 L9.1 15 L16.3 7.5" fill="none" stroke="#e9cd9c" stroke-width="1.9"/><circle cx="2.6" cy="9.8" r="2.0" fill="#e9cd9c"/><circle cx="9.1" cy="15" r="2.0" fill="#e9cd9c"/><circle cx="16.3" cy="7.5" r="2.0" fill="#e9cd9c"/><path d="M2.6 2.6 L9.1 6.8 L16.3 2.2" fill="none" stroke="#c96e5e" stroke-width="1.9"/><circle cx="2.6" cy="2.6" r="2.0" fill="#c96e5e"/><circle cx="9.1" cy="6.8" r="2.0" fill="#c96e5e"/><circle cx="16.3" cy="2.2" r="2.0" fill="#c96e5e"/><path d="M2.2 16 L8.8 10.8 L16.3 12.7" fill="none" stroke="#3f7fc0" stroke-width="1.9"/><circle cx="2.2" cy="16" r="2.0" fill="#3f7fc0"/><circle cx="8.8" cy="10.8" r="2.0" fill="#3f7fc0"/><circle cx="16.3" cy="12.7" r="2.0" fill="#3f7fc0"/></svg>
<div class="t" style="left:55.3px;top:548.08px;font-size:12.4px;letter-spacing:0.192px;color:#3a3a3a;line-height:normal;">Dropout Prediction</div>
<svg style="left:17px;top:579px" width="16" height="18"><rect x="0.8" y="0.8" width="14.5" height="15.5" fill="#fafafa" stroke="#8f8f8f" stroke-width="1.5"/><rect x="0" y="0" width="16" height="2.3" fill="#8f8f8f"/><rect x="3.2" y="4.2" width="2.6" height="2.6" fill="#c3c3c3"/><rect x="6.8" y="4.2" width="2.6" height="2.6" fill="#c3c3c3"/><rect x="10.4" y="4.2" width="2.6" height="2.6" fill="#c3c3c3"/><rect x="3.2" y="8.0" width="2.6" height="2.6" fill="#c3c3c3"/><rect x="6.8" y="8.0" width="2.6" height="2.6" fill="#c3c3c3"/><rect x="10.4" y="8.0" width="2.6" height="2.6" fill="#c3c3c3"/><rect x="3.2" y="11.8" width="2.6" height="2.6" fill="#c3c3c3"/><rect x="6.8" y="11.8" width="2.6" height="2.6" fill="#c3c3c3"/><rect x="10.4" y="11.8" width="2.6" height="2.6" fill="#c3c3c3"/></svg>
<div class="t" style="left:38.1px;top:579.22px;font-size:16px;letter-spacing:-0.448px;color:#5a5a5a;line-height:normal;">Tables</div>
<svg style="left:268px;top:583px" width="10" height="8"><path d="M1 6.5 L5 2.5 L9 6.5" fill="none" stroke="#444" stroke-width="1.8"/></svg>
<svg style="left:35px;top:607.5px" width="16" height="18"><rect x="0.8" y="0.8" width="14.5" height="15.5" fill="#fafafa" stroke="#8f8f8f" stroke-width="1.5"/><rect x="0" y="0" width="16" height="2.3" fill="#8f8f8f"/><rect x="3.2" y="4.2" width="2.6" height="2.6" fill="#c3c3c3"/><rect x="6.8" y="4.2" width="2.6" height="2.6" fill="#c3c3c3"/><rect x="10.4" y="4.2" width="2.6" height="2.6" fill="#c3c3c3"/><rect x="3.2" y="8.0" width="2.6" height="2.6" fill="#c3c3c3"/><rect x="6.8" y="8.0" width="2.6" height="2.6" fill="#c3c3c3"/><rect x="10.4" y="8.0" width="2.6" height="2.6" fill="#c3c3c3"/><rect x="3.2" y="11.8" width="2.6" height="2.6" fill="#c3c3c3"/><rect x="6.8" y="11.8" width="2.6" height="2.6" fill="#c3c3c3"/><rect x="10.4" y="11.8" width="2.6" height="2.6" fill="#c3c3c3"/></svg>
<div class="t" style="left:55.2px;top:609.88px;font-size:12.4px;letter-spacing:0.061px;color:#3a3a3a;line-height:normal;">Enrollment Prediction Table</div>
<svg style="left:35px;top:631.5px" width="16" height="18"><rect x="0.8" y="0.8" width="14.5" height="15.5" fill="#fafafa" stroke="#8f8f8f" stroke-width="1.5"/><rect x="0" y="0" width="16" height="2.3" fill="#8f8f8f"/><rect x="3.2" y="4.2" width="2.6" height="2.6" fill="#c3c3c3"/><rect x="6.8" y="4.2" width="2.6" height="2.6" fill="#c3c3c3"/><rect x="10.4" y="4.2" width="2.6" height="2.6" fill="#c3c3c3"/><rect x="3.2" y="8.0" width="2.6" height="2.6" fill="#c3c3c3"/><rect x="6.8" y="8.0" width="2.6" height="2.6" fill="#c3c3c3"/><rect x="10.4" y="8.0" width="2.6" height="2.6" fill="#c3c3c3"/><rect x="3.2" y="11.8" width="2.6" height="2.6" fill="#c3c3c3"/><rect x="6.8" y="11.8" width="2.6" height="2.6" fill="#c3c3c3"/><rect x="10.4" y="11.8" width="2.6" height="2.6" fill="#c3c3c3"/></svg>
<div class="t" style="left:55.2px;top:633.48px;font-size:12.4px;letter-spacing:-0.079px;color:#3a3a3a;line-height:normal;">Events Prediction Table</div>
<svg style="left:35px;top:655.5px" width="16" height="18"><rect x="0.8" y="0.8" width="14.5" height="15.5" fill="#fafafa" stroke="#8f8f8f" stroke-width="1.5"/><rect x="0" y="0" width="16" height="2.3" fill="#8f8f8f"/><rect x="3.2" y="4.2" width="2.6" height="2.6" fill="#c3c3c3"/><rect x="6.8" y="4.2" width="2.6" height="2.6" fill="#c3c3c3"/><rect x="10.4" y="4.2" width="2.6" height="2.6" fill="#c3c3c3"/><rect x="3.2" y="8.0" width="2.6" height="2.6" fill="#c3c3c3"/><rect x="6.8" y="8.0" width="2.6" height="2.6" fill="#c3c3c3"/><rect x="10.4" y="8.0" width="2.6" height="2.6" fill="#c3c3c3"/><rect x="3.2" y="11.8" width="2.6" height="2.6" fill="#c3c3c3"/><rect x="6.8" y="11.8" width="2.6" height="2.6" fill="#c3c3c3"/><rect x="10.4" y="11.8" width="2.6" height="2.6" fill="#c3c3c3"/></svg>
<div class="t" style="left:55.2px;top:657.58px;font-size:12.4px;letter-spacing:0.148px;color:#3a3a3a;line-height:normal;">Dropout Prediction Table</div>
<svg style="left:35px;top:679.5px" width="16" height="18"><rect x="0.8" y="0.8" width="14.5" height="15.5" fill="#fafafa" stroke="#8f8f8f" stroke-width="1.5"/><rect x="0" y="0" width="16" height="2.3" fill="#8f8f8f"/><rect x="3.2" y="4.2" width="2.6" height="2.6" fill="#c3c3c3"/><rect x="6.8" y="4.2" width="2.6" height="2.6" fill="#c3c3c3"/><rect x="10.4" y="4.2" width="2.6" height="2.6" fill="#c3c3c3"/><rect x="3.2" y="8.0" width="2.6" height="2.6" fill="#c3c3c3"/><rect x="6.8" y="8.0" width="2.6" height="2.6" fill="#c3c3c3"/><rect x="10.4" y="8.0" width="2.6" height="2.6" fill="#c3c3c3"/><rect x="3.2" y="11.8" width="2.6" height="2.6" fill="#c3c3c3"/><rect x="6.8" y="11.8" width="2.6" height="2.6" fill="#c3c3c3"/><rect x="10.4" y="11.8" width="2.6" height="2.6" fill="#c3c3c3"/></svg>
<div class="t" style="left:55.2px;top:681.18px;font-size:12.4px;letter-spacing:-0.028px;color:#3a3a3a;line-height:normal;">Summary Statistics Per-Simulation</div>
<svg style="left:35px;top:702.5px" width="16" height="18"><rect x="0.8" y="0.8" width="14.5" height="15.5" fill="#fafafa" stroke="#8f8f8f" stroke-width="1.5"/><rect x="0" y="0" width="16" height="2.3" fill="#8f8f8f"/><rect x="3.2" y="4.2" width="2.6" height="2.6" fill="#c3c3c3"/><rect x="6.8" y="4.2" width="2.6" height="2.6" fill="#c3c3c3"/><rect x="10.4" y="4.2" width="2.6" height="2.6" fill="#c3c3c3"/><rect x="3.2" y="8.0" width="2.6" height="2.6" fill="#c3c3c3"/><rect x="6.8" y="8.0" width="2.6" height="2.6" fill="#c3c3c3"/><rect x="10.4" y="8.0" width="2.6" height="2.6" fill="#c3c3c3"/><rect x="3.2" y="11.8" width="2.6" height="2.6" fill="#c3c3c3"/><rect x="6.8" y="11.8" width="2.6" height="2.6" fill="#c3c3c3"/><rect x="10.4" y="11.8" width="2.6" height="2.6" fill="#c3c3c3"/></svg>
<div class="t" style="left:55.2px;top:704.58px;font-size:12.4px;letter-spacing:-0.009px;color:#3a3a3a;line-height:normal;">Per-Simulation Subject-Level Data</div>
<div class="t" style="left:312.6px;top:138.37px;font-size:16.5px;letter-spacing:-0.457px;color:#bdbdbd;line-height:normal;">Step 1</div>
<div class="abs" style="left:366px;top:136px;width:1px;height:21px;background:#c8c8c8"></div>
<div class="t" style="left:376.3px;top:138.27px;font-size:16.5px;letter-spacing:0.228px;color:#333;line-height:normal;">Select the type of prediction</div>
<div class="abs" style="left:311px;top:167px;width:1265px;height:2px;background:#e6e6e6"></div>
<svg style="left:1544px;top:137px" width="18" height="18"><path d="M1.5 8.6 H16 M9.5 2 L16 8.6 L9.5 15.2" fill="none" stroke="#333" stroke-width="1.3"/></svg>
<div class="abs" style="left:1595px;top:125px;width:23px;height:35px;background:#a9a9a9"></div>
<div class="t" style="left:1593px;top:136px;width:27px;transform:rotate(90deg);font-size:12.5px;color:#333;text-align:center">Help</div>
<div class="abs" style="left:316px;top:197px;width:264px;height:118px;border:1px solid #b9b9b9"></div>
<div class="abs" style="left:324px;top:190px;width:47px;height:14px;background:#fff"></div>
<div class="t" style="left:329.4px;top:191.32px;font-size:12.8px;letter-spacing:0.363px;color:#505050;line-height:normal;-webkit-text-stroke:0.45px #505050">Target</div>
<div class="abs" style="left:601px;top:197px;width:230px;height:118px;border:1px solid #b9b9b9"></div>
<div class="abs" style="left:609px;top:190px;width:42px;height:14px;background:#fff"></div>
<div class="t" style="left:613.8px;top:190.92px;font-size:12.8px;letter-spacing:1.080px;color:#505050;line-height:normal;-webkit-text-stroke:0.45px #505050">Input</div>
<div class="abs" style="left:316px;top:348px;width:264px;height:90px;border:1px solid #b9b9b9"></div>
<div class="abs" style="left:324px;top:341px;width:118px;height:14px;background:#fff"></div>
<div class="t" style="left:328.6px;top:343.02px;font-size:12.8px;letter-spacing:0.509px;color:#505050;line-height:normal;-webkit-text-stroke:0.45px #505050">Enrollment Status</div>
<div class="radio" style="left:332px;top:226.0px"></div>
<div class="t" style="left:352.6px;top:228.58px;font-size:12.4px;letter-spacing:0.070px;color:#3a3a3a;line-height:normal;">Enrollment Only</div>
<div class="radio on" style="left:332px;top:254.0px"></div>
<div class="t" style="left:352.6px;top:256.58px;font-size:12.4px;letter-spacing:-0.021px;color:#3a3a3a;line-height:normal;">Unblinded Events</div>
<div class="radio" style="left:332px;top:282.0px"></div>
<div class="t" style="left:352.6px;top:284.58px;font-size:12.4px;letter-spacing:-0.147px;color:#3a3a3a;line-height:normal;">Blinded Events</div>
<div class="radio" style="left:617px;top:226.0px"></div>
<div class="t" style="left:637.6px;top:228.58px;font-size:12.4px;color:#3a3a3a;line-height:normal;">Subject Data</div>
<div class="radio" style="left:617px;top:254.0px"></div>
<div class="t" style="left:637.6px;top:256.58px;font-size:12.4px;color:#3a3a3a;line-height:normal;">Subject + Site Data</div>
<div class="radio" style="left:617px;top:282.0px"></div>
<div class="t" style="left:637.6px;top:284.58px;font-size:12.4px;color:#3a3a3a;line-height:normal;">Summary Data</div>
<div class="radio on" style="left:332px;top:377.5px"></div>
<div class="t" style="left:352.6px;top:380.08px;font-size:12.4px;letter-spacing:0.238px;color:#3a3a3a;line-height:normal;">Ongoing</div>
<div class="radio" style="left:332px;top:405.5px"></div>
<div class="t" style="left:352.6px;top:408.08px;font-size:12.4px;letter-spacing:0.061px;color:#3a3a3a;line-height:normal;">Complete</div>
<div class="abs" style="left:311px;top:825px;width:1265px;height:1px;background:#dcdcdc"></div>
<div class="abs" style="left:1475px;top:837px;width:95px;height:30px;border:1px solid #adadad;background:linear-gradient(#f3f3f3,#e3e3e3)"></div>
<div class="t" style="left:1475px;top:845px;width:95px;text-align:center;font-size:13px;color:#222">Next</div>
<svg style="left:5px;top:892px" width="17" height="17"><circle cx="8.4" cy="8.4" r="7.6" fill="#fff"/><circle cx="9.2" cy="5" r="1.3" fill="#234f86"/><path d="M7.4 7.6 H9.4 L8.2 11.8 Q8 12.8 9.4 12.2" fill="none" stroke="#234f86" stroke-width="1.7"/></svg>
<div class="t" style="left:1548.4px;top:888.92px;font-size:16px;color:#fff;line-height:normal;-webkit-text-stroke:0.4px #fff">n</div>
<div class="t" style="left:1572.7px;top:888.92px;font-size:16px;letter-spacing:-0.340px;color:#fff;line-height:normal;-webkit-text-stroke:0.4px #fff">uery</div>
<svg style="left:0;top:0" width="1" height="1"><path d="M1560.5 901.5 A5 5.2 0 1 1 1568.5 899.5" fill="none" stroke="#1d4f8c" stroke-width="2.6" stroke-linecap="round"/><path d="M1568.5 899.5 Q1567 903 1570 905 L1573.5 909" fill="none" stroke="#3fb3a2" stroke-width="2" stroke-linecap="round"/><path d="M1563 902 Q1566 907 1572 911" fill="none" stroke="#1d4f8c" stroke-width="1.6" stroke-linecap="round"/></svg>
<svg style="left:0;top:0" width="1" height="1"><g fill="#d6ecf7"><rect x="1620" y="904" width="1.6" height="1.6"/><rect x="1617" y="907" width="1.6" height="1.6"/><rect x="1620" y="907" width="1.6" height="1.6"/><rect x="1614" y="910" width="1.6" height="1.6"/><rect x="1617" y="910" width="1.6" height="1.6"/><rect x="1620" y="910" width="1.6" height="1.6"/></g></svg>
<svg style="left:0;top:0" width="1625" height="914" viewBox="0 0 1625 914">
  <defs>
    <linearGradient id="wg" x1="0" y1="160" x2="0" y2="440" gradientUnits="userSpaceOnUse">
      <stop offset="0" stop-color="#3371b8"/>
      <stop offset="1" stop-color="#2594bf"/>
    </linearGradient>
  </defs>
    <clipPath id="cc"><ellipse cx="824.2" cy="448.3" rx="297" ry="289"/></clipPath>
  <path d="M827.2 440.9 L533.2 40.9 L1116.2 40.9 Z" fill="url(#wg)" clip-path="url(#cc)"/>
  <g transform="translate(824.2 448.3) scale(1.0276 1)">
    <circle cx="0" cy="0" r="289" fill="none" stroke="#4bb4aa" stroke-width="17"/>
  </g>
  <path d="M742.6 356 A35 35 0 0 1 798.6 327.7 L938.6 429.7 A35 35 0 0 1 938.6 486.3 L798.6 587.3 A35 35 0 0 1 742.6 559 Z" fill="#fff" stroke="#6b777b" stroke-width="7.6"/>
</svg>
</body></html>
